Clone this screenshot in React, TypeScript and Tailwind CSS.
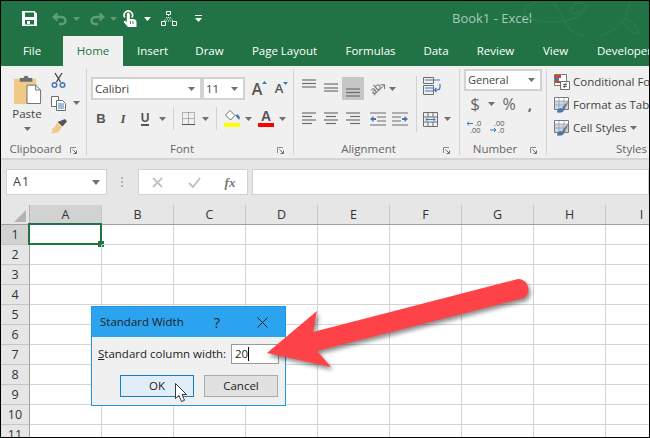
import type { ReactNode } from "react";

const COLUMNS = ["A", "B", "C", "D", "E", "F", "G", "H", "I"];
const ROWS = [1, 2, 3, 4, 5, 6, 7, 8, 9, 10, 11];

const TABS = [
  { label: "File", width: "w-[62px]" },
  { label: "Home", width: "w-[60px]", active: true },
  { label: "Insert", width: "w-[59px]" },
  { label: "Draw", width: "w-[55px]" },
  { label: "Page Layout", width: "w-[95px]" },
  { label: "Formulas", width: "w-[77px]" },
  { label: "Data", width: "w-[54px]" },
  { label: "Review", width: "w-[65px]" },
  { label: "View", width: "w-[55px]" },
];

function Caret({ color = "#6f6f6f" }: { color?: string }) {
  return (
    <svg width="7" height="4" viewBox="0 0 7 4" className="shrink-0">
      <path d="M0 0h7L3.5 4z" fill={color} />
    </svg>
  );
}

function Slot({ w, children }: { w: string; children?: ReactNode }) {
  return <div className={`flex h-full shrink-0 items-center justify-center ${w}`}>{children}</div>;
}

function VSep() {
  return <div className="h-[23px] w-px bg-[#d2d2d2]" />;
}

function Launcher() {
  return (
    <svg width="7" height="7" viewBox="0 0 7 7" className="shrink-0">
      <path d="M.5 6V.5H6" fill="none" stroke="#8a8a8a" />
      <path d="M2.5 2.5L6 6M6.5 3.5v3h-3" fill="none" stroke="#6f6f6f" />
    </svg>
  );
}

// bordered group: body on top, caption row with optional launcher underneath
function Group({ w, label, children }: { w: string; label: string; children: ReactNode }) {
  return (
    <div className={`flex h-[86px] shrink-0 flex-col border-r border-[#d2d2d2] ${w}`}>
      <div className="h-[70px] shrink-0">{children}</div>
      <div className="flex h-[16px] items-center pt-[4px]">
        <span className="flex-1 text-center text-[11.5px] leading-none text-[#666]">{label}</span>
        <div className="flex w-[16px] items-center pt-[2px]">
          <Launcher />
        </div>
      </div>
    </div>
  );
}

function Bars({ ys, xs }: { ys: number[]; xs: [number, number][] }) {
  return (
    <svg width="14" height="23" viewBox="0 0 14 23">
      {ys.map((y, i) => (
        <line key={i} x1={xs[i][0]} x2={xs[i][1]} y1={y} y2={y} stroke="#6d6d6d" strokeWidth="1.2" />
      ))}
    </svg>
  );
}

function IndentIcon({ flip }: { flip?: boolean }) {
  return (
    <svg width="16" height="14" viewBox="0 0 16 14" className={flip ? "-scale-x-100" : ""}>
      <path d="M0 1h16M7 5h9M7 9h9M0 13h16" stroke="#6d6d6d" strokeWidth="1.1" />
      <path d="M0 7l3.5-3v2H6v2H3.5v2z" fill="#3f78b5" />
    </svg>
  );
}

function GalleryIcon({ conditional }: { conditional?: boolean }) {
  if (conditional) {
    return (
      <svg width="16" height="16" viewBox="0 0 16 16" className="shrink-0">
        <path d="M.5.5h12v11H.5z" fill="#fff" stroke="#7a7a7a" />
        <path d="M1 1h6v3H1z" fill="#d24726" />
        <path d="M1 4h4v3H1z" fill="#3f78b5" />
        <path d="M1 7h6v2H1z" fill="#d24726" />
        <path d="M6.5 7.5h9v8h-9z" fill="#fff" stroke="#6d6d6d" />
        <path d="M9 10.5h4M9 12.5h4M12 9l-2 5" stroke="#444" strokeWidth=".8" />
      </svg>
    );
  }
  return (
    <svg width="16" height="16" viewBox="0 0 16 16" className="shrink-0">
      <path d="M.5.5h14v12H.5z" fill="#fff" stroke="#7a7a7a" />
      <path d="M1 4h13v8H1z" fill="#c9d6e6" />
      <path d="M1 4h13M5 1v11M10 1v11M1 8h13" stroke="#9a9a9a" strokeWidth=".7" />
      <path d="M15 3L8 11l2 2z" fill="#6d6d6d" />
      <path d="M3 15.5c0-3 2-4.500 4-4.500l3 2c0 2-3 3-7 2.500z" fill="#3f78b5" />
    </svg>
  );
}

function TitleBar() {
  return (
    <div className="relative flex h-[35px] items-center text-[#fff]">
      {/* background flourish */}
      <svg width="130" height="35" viewBox="520 1 130 35" className="absolute right-0 top-0" fill="none" stroke="#2c7c4f" strokeWidth="1.1">
        <path d="M538 3c-9 1-14 6-12 11 3 7 20 8 33 8 14 0 26-8 30-16" />
        <path d="M552 1c6 4 11 14 16 24 5 9 18 13 31 11 12-2 22-10 27-18 3-6 3-12 6-17" />
        <path d="M576 4c6-2 11-1 10 3-1 5-10 8-13 6-2-2 0-7 3-9z" />
        <path d="M622 20c4 6 10 12 15 14 3 1 3-3 1-7-2-3-8-6-13-8" />
      </svg>
      <div className="ml-[21px] w-[16px]">
        <svg width="15" height="15" viewBox="0 0 15 15" fill="#fff">
          <path fillRule="evenodd" d="M0 0h12.500L15 2.500V15H0zM3 1.500V6h9V1.500zM3 9v4.500h9V9zM5 10h3v3H5z" />
        </svg>
      </div>
      <div className="ml-[14px] w-[15px]">
        <svg width="15" height="14" viewBox="0 0 15 14" fill="none" stroke="#5f9c7c" strokeWidth="2.4">
          <path d="M5.500 1.500L1.800 5 5.500 8.500M2 5h7c6 0 6 7 0 7H7" />
        </svg>
      </div>
      <div className="ml-[5px] flex w-[9px] justify-center">
        <Caret color="#5f9c7c" />
      </div>
      <div className="ml-[9px] w-[15px]">
        <svg width="15" height="14" viewBox="0 0 15 14" fill="none" stroke="#5f9c7c" strokeWidth="2.4">
          <path d="M9.500 1.500L13.200 5 9.500 8.500M13 5H6c-6 0-6 7 0 7h2" />
        </svg>
      </div>
      <div className="ml-[4px] flex w-[9px] justify-center">
        <Caret color="#5f9c7c" />
      </div>
      <div className="ml-[5px] w-[14px]">
        <svg width="14" height="17" viewBox="0 0 14 17">
          <path d="M1.800 7.500a4.200 4.200 0 1 1 7 0" fill="none" stroke="#fff" strokeWidth="1.600" />
          <path d="M3.800 4a1.500 1.500 0 0 1 3 0v5h3.500c2 .3 3.200 1.200 3.200 3v5H5L1 12.500c-.6-1.200.7-2.200 1.800-1.300l1 .9z" fill="#fff" />
          <path d="M7.500 11v3M10 11v3" stroke="#217346" strokeWidth=".8" />
        </svg>
      </div>
      <div className="ml-[7px] flex w-[7px] justify-center">
        <Caret color="#fff" />
      </div>
      <div className="ml-[10px] w-[16px]">
        <svg width="16" height="15" viewBox="0 0 16 15" fill="none" stroke="#fff">
          <path d="M5.500.5h4v3h-4z" />
          <path d="M.5 10.500h4v4h-4zM11.500 10.500h4v4h-4z" />
          <path d="M7.500 4v3M6 6l-3 4M9 6l3 4M6 8h3M5 10h5" strokeDasharray="1 1" />
        </svg>
      </div>
      <div className="ml-[18px] w-[7px]">
        <svg width="7" height="7" viewBox="0 0 7 7" fill="#fff">
          <path d="M0 0h7v1H0zM0 3h7L3.500 7z" />
        </svg>
      </div>
      <span className="ml-[250px] text-[13px] leading-none text-[#a9cbb7]">Book1 - Excel</span>
    </div>
  );
}

function Tabs() {
  return (
    <div className="flex h-[30px] items-stretch whitespace-nowrap text-[11.5px]">
      {TABS.map((tab) => (
        <div
          key={tab.label}
          className={`flex shrink-0 items-center justify-center ${tab.width} ${
            tab.active ? "bg-[#f0f0f0] text-[#217346]" : "text-[#fff]"
          }`}
        >
          {tab.label}
        </div>
      ))}
      <div className="flex items-center pl-[14px] text-[#fff]">Developer</div>
    </div>
  );
}

function ClipboardGroup() {
  return (
    <Group w="w-[86px]" label="Clipboard">
      <div className="flex h-full">
        <div className="flex w-[48px] flex-col items-center pl-[4px] pt-[6px]">
          <svg width="29" height="29" viewBox="0 0 30 30">
            <path d="M1 4h23v26H1z" fill="#f0c987" />
            <path d="M7 3h4c0-3 5-3 5 0h4v4H7z" fill="#6d6d6d" />
            <path d="M14.500 10.500h9l5 5v14h-14z" fill="#fff" stroke="#6d6d6d" />
            <path d="M23.500 10.500v5h5" fill="none" stroke="#6d6d6d" />
          </svg>
          <span className="mt-[2px] text-[11.5px] leading-[16px] text-[#444]">Paste</span>
          <div className="mt-[5px]">
            <Caret />
          </div>
        </div>
        <div className="flex flex-col">
          <div className="flex h-[22px] items-center pl-[2px]">
            <svg width="15" height="16" viewBox="0 0 15 16" fill="none">
              <path d="M4 1l5.500 9M11 1L5.500 10" stroke="#444" strokeWidth="1.300" />
              <circle cx="3.500" cy="13" r="2.300" stroke="#3f78b5" strokeWidth="1.400" />
              <circle cx="11.500" cy="13" r="2.300" stroke="#3f78b5" strokeWidth="1.400" />
            </svg>
          </div>
          <div className="mt-[1px] flex h-[22px] items-center pl-[2px]">
            <svg width="16" height="15" viewBox="0 0 16 15" fill="none">
              <path d="M.5.5h7v10h-7z" stroke="#6d6d6d" fill="#fff" />
              <path d="M5.500 4.500h6l3 3v7h-9z" stroke="#6d6d6d" fill="#fff" />
              <path d="M7 8h6M7 10h6M7 12h6" stroke="#3f78b5" />
            </svg>
            <div className="ml-[6px]">
              <Caret />
            </div>
          </div>
          <div className="mt-[1px] flex h-[22px] items-center pl-[2px]">
            <svg width="16" height="15" viewBox="0 0 16 15">
              <path d="M6 4l5 4-3.500 5c-3 .8-5 1.500-7.500 1 2-2 2-3 1-4l1-1c2 .5 2-2 4-5z" fill="#f0c987" />
              <path d="M6.500 3l5 4.500L16 2.500 14 0z" fill="#555" />
            </svg>
          </div>
        </div>
      </div>
    </Group>
  );
}

function FontGroup() {
  return (
    <Group w="w-[207px]" label="Font">
      <div className="flex h-full flex-col pl-[4px] pt-[8px]">
        <div className="flex h-[23px] items-center">
          <div className="flex h-full w-[111px] items-center justify-between border-2 border-[#d2d2d2] bg-[#fff] pl-[2px] pr-[5px] text-[11.5px] text-[#444]">
            <span>Calibri</span>
            <Caret />
          </div>
          <div className="flex h-full w-[43px] items-center justify-between border-2 border-[#d2d2d2] bg-[#fff] pl-[2px] pr-[5px] text-[11.5px] text-[#444]">
            <span>11</span>
            <Caret />
          </div>
          <Slot w="w-[24px]">
            <span className="relative text-[16px] font-semibold leading-none text-[#555]">
              A
              <svg width="5" height="3" viewBox="0 0 5 3" className="absolute -right-[5px] top-0">
                <path d="M0 3l2.500-3L5 3z" fill="#3f78b5" />
              </svg>
            </span>
          </Slot>
          <Slot w="w-[20px]">
            <span className="relative text-[13px] font-semibold leading-none text-[#555]">
              A
              <svg width="5" height="3" viewBox="0 0 5 3" className="absolute -right-[5px] top-0">
                <path d="M0 0l2.500 3L5 0z" fill="#3f78b5" />
              </svg>
            </span>
          </Slot>
        </div>
        <div className="mt-[7px] flex h-[23px] items-center text-[#555]">
          <Slot w="w-[20px]">
            <span className="font-['Liberation_Sans'] text-[13px] font-bold leading-none">B</span>
          </Slot>
          <Slot w="w-[24px]">
            <span className="font-['Liberation_Serif'] text-[13px] font-bold italic leading-none">I</span>
          </Slot>
          <Slot w="w-[20px]">
            <span className="border-b-2 border-[#555] font-['Liberation_Sans'] text-[12px] font-bold leading-[12px]">U</span>
          </Slot>
          <Slot w="w-[14px]">
            <Caret />
          </Slot>
          <Slot w="w-[8px]">
            <VSep />
          </Slot>
          <Slot w="w-[22px]">
            <svg width="13" height="13" viewBox="0 0 13 13" fill="none" stroke="#777" strokeDasharray="1 1">
              <path d="M.5.500h12v12H.5zM6.500.5v12M.5 6.500h12" />
              <path d="M0 12.500h13" stroke="#555" strokeDasharray="none" />
            </svg>
          </Slot>
          <Slot w="w-[12px]">
            <Caret />
          </Slot>
          <Slot w="w-[10px]">
            <VSep />
          </Slot>
          <Slot w="w-[22px]">
            <div className="flex flex-col items-center">
              <svg width="16" height="12" viewBox="0 0 16 12" fill="none">
                <path d="M6 .5l5 5-4.500 4.500-5-5z" fill="#fff" stroke="#6d6d6d" />
                <path d="M11 5l3-.5 2 3-1 2.500z" fill="#3f78b5" />
              </svg>
              <div className="mt-[1px] h-[4px] w-[16px] bg-[#ffff00]" />
            </div>
          </Slot>
          <Slot w="w-[10px]">
            <Caret />
          </Slot>
          <Slot w="w-[26px]">
            <div className="flex flex-col items-center">
              <span className="font-['Liberation_Sans'] text-[14px] font-bold leading-[12px] text-[#555]">A</span>
              <div className="mt-[1px] h-[4px] w-[16px] bg-[#ff0000]" />
            </div>
          </Slot>
          <Slot w="w-[6px]">
            <Caret />
          </Slot>
        </div>
      </div>
    </Group>
  );
}

function AlignmentGroup() {
  return (
    <Group w="w-[166px]" label="Alignment">
      <div className="flex h-full pt-[8px]">
        <div className="flex w-[122px] flex-col pl-[4px]">
          <div className="flex h-[23px]">
            <Slot w="w-[22px]">
              <Bars ys={[3, 6.5, 10]} xs={[[0, 14], [0, 14], [0, 14]]} />
            </Slot>
            <Slot w="w-[22px]">
              <Bars ys={[7, 11, 14]} xs={[[0, 14], [0, 14], [0, 14]]} />
            </Slot>
            <Slot w="w-[22px] bg-[#c6c6c6]">
              <Bars ys={[12, 15.5, 19]} xs={[[0, 14], [0, 14], [0, 14]]} />
            </Slot>
            <Slot w="w-[22px]">
              <svg width="17" height="16" viewBox="0 0 17 16" fill="none" className="ml-[6px]">
                <text x="0" y="11" fontSize="10.500" fill="#555" transform="rotate(-40 6 8)">ab</text>
                <path d="M4 15L15 4M11 3.500h4.500V8" stroke="#6d6d6d" />
              </svg>
            </Slot>
            <Slot w="w-[12px]">
              <Caret />
            </Slot>
          </div>
          <div className="mt-[7px] flex h-[23px]">
            <Slot w="w-[22px]">
              <Bars ys={[6, 9.500, 13, 16.500]} xs={[[0, 14], [0, 10], [0, 14], [0, 10]]} />
            </Slot>
            <Slot w="w-[22px]">
              <Bars ys={[6, 9.500, 13, 16.500]} xs={[[0, 14], [2, 12], [0, 14], [2, 12]]} />
            </Slot>
            <Slot w="w-[22px]">
              <Bars ys={[6, 9.500, 13, 16.500]} xs={[[0, 14], [4, 14], [0, 14], [4, 14]]} />
            </Slot>
            <div className="w-[3px]" />
            <Slot w="w-[22px]">
              <IndentIcon />
            </Slot>
            <Slot w="w-[22px]">
              <IndentIcon flip />
            </Slot>
          </div>
        </div>
        <div className="mt-[-1px] h-[56px] w-px bg-[#d2d2d2]" />
        <div className="flex flex-col pl-[6px]">
          <div className="h-[23px]">
            <svg width="18" height="18" viewBox="0 0 18 18" fill="none">
              <path d="M.5.500h10v6H.5zM.5 8.500h10v9H.5z" stroke="#6d6d6d" />
              <path d="M2 3h15M2 11h8M2 14h8" stroke="#3f78b5" />
              <path d="M17 7v3c0 2-1 3-3 3h-2M13.500 11l-2 2 2 2" stroke="#3f78b5" strokeWidth="1.200" />
            </svg>
          </div>
          <div className="mt-[11px] flex h-[16px] items-center">
            <svg width="15" height="15" viewBox="0 0 15 15" fill="none">
              <path d="M.5.500h14v14H.5zM.5 5h14M.5 10h14M5 .5V5M10 .5V5M5 10v5M10 10v5" stroke="#6d6d6d" />
              <path d="M3 7.500h9M4.500 6L3 7.500 4.500 9M10.500 6L12 7.500 10.500 9" stroke="#3f78b5" />
            </svg>
            <div className="ml-[6px]">
              <Caret />
            </div>
          </div>
        </div>
      </div>
    </Group>
  );
}

function NumberGroup() {
  return (
    <Group w="w-[87px]" label="Number">
      <div className="flex h-full flex-col pl-[4px]">
        <div className="flex h-[22px] w-[78px] items-center justify-between border-2 border-[#d2d2d2] bg-[#fff] pl-[2px] pr-[5px] text-[11px] text-[#444]">
          <span>General</span>
          <Caret />
        </div>
        <div className="mt-[1px] flex h-[23px] items-center text-[#666]">
          <Slot w="w-[22px]">
            <span className="text-[17px] leading-none">$</span>
          </Slot>
          <Slot w="w-[10px]">
            <Caret />
          </Slot>
          <Slot w="w-[26px]">
            <span className="text-[16px] leading-none">%</span>
          </Slot>
          <Slot w="w-[16px]">
            <span className="text-[15px] font-bold leading-[8px]">,</span>
          </Slot>
        </div>
        <div className="flex h-[23px] items-center">
          <svg width="16" height="15" viewBox="0 0 16 15" className="ml-[3px]" fill="none">
            <path d="M0 4.500h6M2 2.500L0 4.500l2 2" stroke="#3f78b5" />
            <text x="8" y="7" fontSize="7.500" fill="#555">.0</text>
            <text x="3" y="14" fontSize="7.500" fill="#555">.00</text>
          </svg>
          <svg width="16" height="15" viewBox="0 0 16 15" className="ml-[7px]" fill="none">
            <text x="4" y="7" fontSize="7.500" fill="#555">.00</text>
            <path d="M0 11h6M4 9l2 2-2 2" stroke="#3f78b5" />
            <text x="8" y="14" fontSize="7.500" fill="#555">.0</text>
          </svg>
        </div>
      </div>
    </Group>
  );
}

function StylesGroup() {
  return (
    <div className="flex h-[86px] min-w-0 flex-1 flex-col">
      <div className="h-[70px] whitespace-nowrap pl-[7px] pt-[1px] text-[11.5px] text-[#444]">
        <div className="flex h-[23px] items-center gap-[3px]">
          <GalleryIcon conditional />
          <span>Conditional Formatting</span>
        </div>
        <div className="flex h-[23px] items-center gap-[3px]">
          <GalleryIcon />
          <span>Format as Table</span>
        </div>
        <div className="flex h-[23px] items-center gap-[3px]">
          <GalleryIcon />
          <span>Cell Styles</span>
          <Caret />
        </div>
      </div>
      <div className="flex h-[16px] items-center pl-[69px] pt-[4px] text-[11.5px] leading-none text-[#666]">Styles</div>
    </div>
  );
}

function Ribbon() {
  return (
    <div className="flex h-[94px] border-b-2 border-[#d5d5d5] bg-[#f0f0f0] pt-[3px]">
      <ClipboardGroup />
      <FontGroup />
      <AlignmentGroup />
      <NumberGroup />
      <StylesGroup />
    </div>
  );
}

function FormulaBar() {
  return (
    <div className="flex h-[45px] items-start bg-[#e6e6e6] pl-[5px] pt-[9px]">
      <div className="flex h-[26px] w-[101px] items-center justify-between border border-[#d2d2d2] bg-[#fff] pl-[6px] pr-[6px] text-[12.500px] tracking-[1px] text-[#444]">
        <span>A1</span>
        <svg width="8" height="5" viewBox="0 0 8 5">
          <path d="M0 0h8L4 5z" fill="#6f6f6f" />
        </svg>
      </div>
      <div className="flex h-[26px] w-[31px] items-center justify-center">
        <svg width="3" height="11" viewBox="0 0 3 11" fill="#b5b5b5">
          <path d="M0 0h2v2H0zM0 4h2v2H0zM0 8h2v2H0z" />
        </svg>
      </div>
      <div className="flex h-[26px] w-[110px] items-center border border-[#d2d2d2] bg-[#fff]">
        <div className="flex w-[37px] justify-center">
          <svg width="11" height="11" viewBox="0 0 11 11" stroke="#c2c2c2" strokeWidth="1.800">
            <path d="M1 1l9 9M10 1l-9 9" />
          </svg>
        </div>
        <div className="flex w-[37px] justify-center">
          <svg width="13" height="11" viewBox="0 0 13 11" fill="none" stroke="#c2c2c2" strokeWidth="2">
            <path d="M1 6l4 4 7-9" />
          </svg>
        </div>
        <span className="w-[34px] text-center font-['Liberation_Serif'] text-[13px] font-bold italic leading-none text-[#777]">fx</span>
      </div>
      <div className="ml-[4px] h-[26px] flex-1 border border-[#d2d2d2] bg-[#fff]" />
    </div>
  );
}

function Sheet() {
  return (
    <div className="flex-1 overflow-hidden bg-[#fff] text-[12.500px] text-[#333]">
      <div className="flex h-[20px] border-b border-[#9f9f9f] bg-[#e6e6e6]">
        <div className="flex w-[29px] shrink-0 items-end justify-end border-r border-[#b5b5b5] pb-[2px] pr-[3px]">
          <svg width="12" height="12" viewBox="0 0 12 12">
            <path d="M12 0v12H0z" fill="#b4b4b4" />
          </svg>
        </div>
        {COLUMNS.map((col) => (
          <div
            key={col}
            className={`flex w-[72px] shrink-0 items-center justify-center border-r border-[#c6c6c6] pt-[1px] ${
              col === "A" ? "bg-[#d2d2d2]" : ""
            }`}
          >
            {col}
          </div>
        ))}
      </div>
      {ROWS.map((row) => (
        <div key={row} className="flex h-[20px]">
          <div
            className={`flex w-[29px] shrink-0 items-center justify-center border-b border-r border-b-[#c6c6c6] border-r-[#9f9f9f] pt-[2px] ${
              row === 1 ? "bg-[#d2d2d2]" : "bg-[#e6e6e6]"
            }`}
          >
            {row}
          </div>
          {COLUMNS.map((col) => (
            <div key={col} className="relative w-[72px] shrink-0 border-b border-r border-[#d4d4d4]">
              {row === 1 && col === "A" ? (
                <div className="absolute -left-[2px] -top-[2px] h-[22px] w-[74px] border-2 border-[#217346]">
                  <div className="absolute -bottom-[4px] -right-[4px] h-[6px] w-[6px] bg-[#217346]" />
                </div>
              ) : null}
            </div>
          ))}
        </div>
      ))}
    </div>
  );
}

function WidthDialog() {
  return (
    <div className="absolute left-[90px] top-[305px] flex h-[100px] w-[195px] flex-col border border-[#1e98e6] bg-[#f0f0f0] text-[11.5px] text-[#222]">
      <div className="flex h-[30px] shrink-0 items-center bg-[#2ba3ef] pl-[8px]">
        <span className="w-[111px]">Standard Width</span>
        <span className="w-[12px] text-center text-[14px]">?</span>
        <svg width="11" height="11" viewBox="0 0 11 11" stroke="#222" className="ml-[34px]">
          <path d="M.5.5l10 10M10.500.5l-10 10" />
        </svg>
      </div>
      <div className="flex items-center pl-[6px] pt-[7px]">
        <span className="w-[133px] whitespace-nowrap">
          <span className="underline">S</span>tandard column width:
        </span>
        <div className="flex h-[20px] w-[48px] items-center border border-[#9a9a9a] bg-[#fff] pl-[3px]">
          20
          <div className="h-[14px] w-px bg-[#000]" />
        </div>
      </div>
      <div className="mt-[11px] flex pl-[28px]">
        <div className="relative flex h-[22px] w-[74px] items-center justify-center border border-[#0f7fd1] bg-[#e1eefa]">
          OK
          <svg width="12" height="19" viewBox="0 0 12 19" className="absolute left-[54px] top-[7px]">
            <path d="M.5.5v15l3.500-3 2.500 6 3-1.200-2.500-5.800H11.500z" fill="#fff" stroke="#222" strokeWidth=".9" />
          </svg>
        </div>
        <div className="ml-[10px] flex h-[22px] w-[74px] items-center justify-center border border-[#ababab] bg-[#e1e1e1]">
          Cancel
        </div>
      </div>
    </div>
  );
}

export default function App() {
  return (
    <div className="relative flex h-[438px] w-[650px] flex-col overflow-hidden border border-[#000] bg-[#217346] font-['Open_Sans',sans-serif]">
      <TitleBar />
      <Tabs />
      <Ribbon />
      <FormulaBar />
      <Sheet />
      <WidthDialog />
      {/* callout arrow, coordinates are page pixels */}
      <svg
        width="650"
        height="438"
        viewBox="0 0 650 438"
        className="pointer-events-none absolute -left-[1px] -top-[1px] drop-shadow-[2px_3px_2px_rgba(0,0,0,0.45)]"
      >
        <path
          d="M267 353L317 311L313 332L518 279A10.500 10.500 0 0 1 524 298L317 351L331 367Z"
          fill="#fd4348"
        />
      </svg>
    </div>
  );
}
